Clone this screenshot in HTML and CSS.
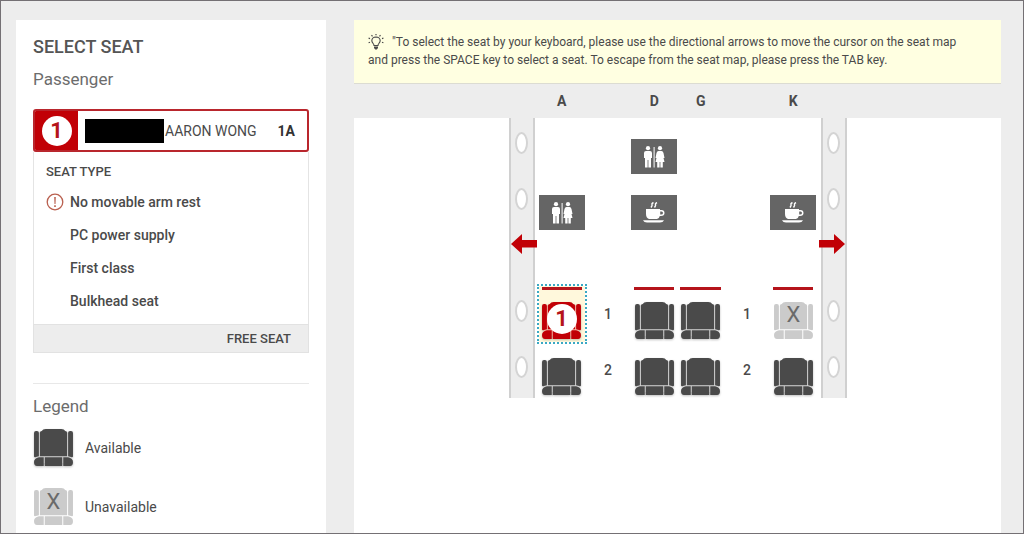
FILE: index.html
```html
<!DOCTYPE html>
<html lang="en">
<head>
  <meta charset="UTF-8" />
  <meta name="viewport" content="width=device-width, initial-scale=1.0"/>
  <title>Select Seat</title>
  <link rel="stylesheet" href="styles.css">
</head>
<body>

<!-- Shared icons -->
<svg class="icon-defs" aria-hidden="true">
  <symbol id="seat" viewBox="0 0 40 38">
    <path d="M6 4 Q6 2 8 2 Q9 0 12 0 H28 Q31 0 32 2 Q34 2 34 4 V28 H6 Z"/>
    <path d="M0 4 Q0 2 2 2 H3 Q5 2 5 4 V28 L1 29 Q0 29 0 28 Z"/>
    <path d="M40 4 Q40 2 38 2 H37 Q35 2 35 4 V28 L39 29 Q40 29 40 28 Z"/>
    <path d="M10 29 H5 Q0 30 0 34 Q0 38 3 38 H10 Z"/>
    <path d="M11 29 H29 V38 H11 Z"/>
    <path d="M30 29 H35 Q40 30 40 34 Q40 38 37 38 H30 Z"/>
  </symbol>
  <symbol id="lavatory" viewBox="0 0 22 22">
    <circle cx="5" cy="2.2" r="2.1"/>
    <path d="M3 5 H7 Q9 5 9 7 V12 H8 V21.5 H5.4 V14 H4.6 V21.5 H2 V12 H1 V7 Q1 5 3 5 Z"/>
    <path d="M10.6 1 H11.6 V21.5 H10.6 Z"/>
    <circle cx="17" cy="2.2" r="2.1"/>
    <path d="M15.5 5 H18.5 Q20 5 20.5 7 L21.5 12 H20.5 L21.5 16 H19.8 V21.5 H17.4 V16 H16.6 V21.5 H14.2 V16 H12.5 L13.5 12 H12.5 L13.5 7 Q14 5 15.5 5 Z"/>
  </symbol>
  <symbol id="galley" viewBox="0 0 22 22">
    <path d="M3 7 H17 V8 H18.5 Q21.5 8 21.5 11 Q21.5 14 18 14 H16.8 Q16 17 14 17 H6 Q3 16 3 12 Z M17.2 9.5 V12.5 H18 Q20 12.5 20 11 Q20 9.5 18.5 9.5 Z" fill-rule="evenodd"/>
    <path d="M0 18.2 H21 Q20 20.5 17 20.5 H4 Q1 20.5 0 18.2 Z"/>
    <path d="M10.5 0.5 Q8.5 1.5 9 2.5 Q9.5 3.5 8 5.5 M14 0.5 Q12 1.5 12.5 2.5 Q13 3.5 11.5 5.5" fill="none" stroke="currentColor" stroke-width="1.4"/>
  </symbol>
  <symbol id="arrow" viewBox="0 0 26 20">
    <path d="M0 10 L11 0 V6 H26 V13.5 H11 V20 Z"/>
  </symbol>
</svg>

<aside class="sidebar">
  <h1>SELECT SEAT</h1>
  <h2>Passenger</h2>

  <div class="passenger">
    <button class="passenger-head" type="button">
      <span class="passenger-no"><span class="badge">1</span></span>
      <span class="redacted"></span>
      <span class="passenger-name">AARON WONG</span>
      <span class="passenger-seat">1A</span>
    </button>
    <div class="details">
      <h3>SEAT TYPE</h3>
      <ul>
        <li>
          <svg class="alert" viewBox="0 0 18 18" aria-hidden="true">
            <circle cx="9" cy="9" r="7.8" fill="none" stroke="currentColor" stroke-width="1.3"/>
            <path d="M8.2 4 H9.8 L9.5 11 H8.5 Z M8.2 12.3 H9.8 V13.9 H8.2 Z" fill="currentColor"/>
          </svg>
          No movable arm rest
        </li>
        <li>PC power supply</li>
        <li>First class</li>
        <li>Bulkhead seat</li>
      </ul>
    </div>
    <button class="free-btn" type="button">FREE SEAT</button>
  </div>

  <div class="legend">
    <h2>Legend</h2>
    <div class="legend-item">
      <span class="seat"><svg><use href="#seat"/></svg></span>
      Available
    </div>
    <div class="legend-item">
      <span class="seat unavailable"><svg><use href="#seat"/></svg><span class="mark">X</span></span>
      Unavailable
    </div>
  </div>
</aside>

<main class="main">
  <p class="notice">
    <svg class="bulb" viewBox="0 0 16 16" aria-hidden="true">
      <path d="M6 11.5 Q6 10.3 4.8 9 Q3.8 8 3.8 6.6 Q4 3.2 8 3 Q12 3.2 12.2 6.6 Q12.2 8 11.2 9 Q10 10.3 10 11.5 Z" fill="none" stroke="currentColor" stroke-width="1.1"/>
      <path d="M6 12.5 H10 V14 L8.8 15.6 H7.2 L6 14 Z" fill="currentColor"/>
      <path d="M3.5 1.2 L4.5 2.4 M12.5 1.2 L11.5 2.4 M8 0 V1.3 M0.6 4.2 L2 4.6 M15.4 4.2 L14 4.6 M0.6 8.8 L2 8.3 M15.4 8.8 L14 8.3" stroke="currentColor" stroke-width="1.2"/>
    </svg>
    "To select the seat by your keyboard, please use the directional arrows to move the cursor on the seat map<br>
    and press the SPACE key to select a seat. To escape from the seat map, please press the TAB key.
  </p>

  <div class="row letters">
    <span>A</span><span></span><span>D</span><span>G</span><span></span><span>K</span>
  </div>

  <div class="map">
    <div class="cabin">
      <div class="wall">
        <div><span class="window"></span></div>
        <div><span class="window"></span></div>
        <div><svg class="exit"><use href="#arrow"/></svg></div>
        <div><span class="window"></span></div>
        <div><span class="window"></span></div>
      </div>

      <div class="floor">
        <div class="row">
          <span></span><span></span>
          <span class="facility"><svg><use href="#lavatory"/></svg></span>
          <span></span><span></span><span></span>
        </div>
        <div class="row">
          <span class="facility"><svg><use href="#lavatory"/></svg></span>
          <span></span>
          <span class="facility"><svg><use href="#galley"/></svg></span>
          <span></span><span></span>
          <span class="facility"><svg><use href="#galley"/></svg></span>
        </div>
        <div class="row"></div>
        <div class="row">
          <button class="seat bulkhead selected" type="button" aria-label="Seat 1A"><svg><use href="#seat"/></svg><span class="badge">1</span></button>
          <span class="row-no">1</span>
          <button class="seat bulkhead" type="button" aria-label="Seat 1D"><svg><use href="#seat"/></svg></button>
          <button class="seat bulkhead" type="button" aria-label="Seat 1G"><svg><use href="#seat"/></svg></button>
          <span class="row-no">1</span>
          <button class="seat bulkhead unavailable" type="button" aria-label="Seat 1K" disabled><svg><use href="#seat"/></svg><span class="mark">X</span></button>
        </div>
        <div class="row">
          <button class="seat" type="button" aria-label="Seat 2A"><svg><use href="#seat"/></svg></button>
          <span class="row-no">2</span>
          <button class="seat" type="button" aria-label="Seat 2D"><svg><use href="#seat"/></svg></button>
          <button class="seat" type="button" aria-label="Seat 2G"><svg><use href="#seat"/></svg></button>
          <span class="row-no">2</span>
          <button class="seat" type="button" aria-label="Seat 2K"><svg><use href="#seat"/></svg></button>
        </div>
      </div>

      <div class="wall right">
        <div><span class="window"></span></div>
        <div><span class="window"></span></div>
        <div><svg class="exit"><use href="#arrow"/></svg></div>
        <div><span class="window"></span></div>
        <div><span class="window"></span></div>
      </div>
    </div>
  </div>
</main>

</body>
</html>
```

FILE: styles.css
```css
* {
  box-sizing: border-box;
}

body {
  margin: 0;
  min-height: 100vh;
  display: flex;
  gap: 28px;
  padding: 19px 22px 0 15px;
  border: 1px solid #747074;
  background: #ededed;
  color: #4a4a4a;
  font-family: Roboto, sans-serif;
  font-size: 14px;
  line-height: 20px;
}

h1, h2, h3, p, ul {
  margin: 0;
  padding: 0;
}

button {
  padding: 0;
  border: none;
  background: none;
  color: inherit;
  font: inherit;
  cursor: pointer;
}

.icon-defs {
  position: absolute;
  width: 0;
  height: 0;
}

/* Sidebar */
.sidebar {
  flex: 0 0 310px;
  padding: 16px 17px 0;
  background: #fff;
}

h1 {
  color: #555;
  font-size: 18px;
  font-weight: 500;
  line-height: 22px;
}

h2 {
  color: #6c6c6c;
  font-size: 17px;
  font-weight: 400;
  line-height: 22px;
}

h1 + h2 {
  margin-top: 10px;
}

.passenger {
  margin-top: 19px;
}

.passenger-head {
  display: flex;
  align-items: center;
  width: 100%;
  height: 43px;
  overflow: hidden;
  border: 2px solid #b9262d;
  border-radius: 3px;
}

.passenger-no {
  display: flex;
  align-items: center;
  justify-content: center;
  align-self: stretch;
  width: 43px;
  background: #c10006;
}

.badge {
  display: flex;
  align-items: center;
  justify-content: center;
  width: 30px;
  height: 30px;
  border-radius: 50%;
  background: #fff;
  color: #b5141b;
  font-size: 22px;
  font-weight: 700;
}

.redacted {
  width: 79px;
  height: 24px;
  margin: 0 1px 0 7px;
  background: #000;
}

.passenger-seat {
  margin: 0 12px 0 auto;
  color: #333;
  font-weight: 700;
}

.details {
  padding: 10px 12px 13px;
  border: solid #e4e4e4;
  border-width: 0 1px;
}

h3 {
  font-size: 13px;
  font-weight: 500;
  line-height: 20px;
}

.details ul {
  display: grid;
  gap: 13px;
  margin-top: 10px;
  list-style: none;
}

.details li {
  position: relative;
  padding-left: 24px;
  font-weight: 500;
}

.alert {
  position: absolute;
  left: 0;
  top: 1px;
  width: 18px;
  height: 18px;
  color: #b9604f;
}

.free-btn {
  display: block;
  width: 100%;
  height: 29px;
  padding-right: 17px;
  border: 1px solid #e2e2e2;
  background: #ededed;
  font-size: 13px;
  font-weight: 500;
  text-align: right;
}

.legend {
  margin-top: 30px;
  padding-top: 11px;
  border-top: 1px solid #e8e8e8;
}

.legend-item {
  display: flex;
  align-items: center;
  gap: 12px;
  height: 37px;
  margin-top: 12px;
  padding-left: 1px;
}

.legend-item + .legend-item {
  margin-top: 22px;
}

/* Seats */
.seat {
  position: relative;
  display: flex;
  justify-content: center;
  color: #4a4a4a;
}

.seat svg {
  width: 39px;
  height: 37px;
  fill: currentColor;
  background: linear-gradient(#d8d8d8, #d8d8d8) center 3px / 35px 31px no-repeat;
  filter: drop-shadow(0 1px 1px rgba(0, 0, 0, 0.25));
}

.unavailable {
  color: #cbcbcb;
}

.unavailable svg {
  background: none;
  filter: none;
}

.mark {
  position: absolute;
  inset: 3px 0 auto;
  color: #6a6a6a;
  font-size: 22px;
  line-height: 22px;
  text-align: center;
}

/* Main */
.main {
  flex: 1;
  display: flex;
  flex-direction: column;
}

.notice {
  min-height: 64px;
  padding: 13px 14px;
  border-bottom: 1px solid #dcdcd2;
  background: #ffffe1;
  font-size: 12px;
  line-height: 18px;
}

.bulb {
  width: 16px;
  height: 16px;
  margin-right: 5px;
  vertical-align: -4px;
}

.row {
  display: grid;
  grid-template-columns: repeat(6, 1fr);
  height: 56px;
}

.letters {
  align-items: center;
  align-self: center;
  width: 278px;
  height: 34px;
  font-weight: 700;
  text-align: center;
}

.map {
  flex: 1;
  background: #fff;
}

.cabin {
  display: flex;
  width: 338px;
  margin: 0 auto;
}

.floor {
  flex: 1;
  padding: 0 4px;
}

.wall {
  width: 26px;
  border: solid #d0d0d0;
  border-width: 0 2px;
  background: #ededed;
}

.wall div {
  position: relative;
  height: 56px;
  padding-top: 14px;
}

.window {
  display: block;
  width: 13px;
  height: 22px;
  margin: 0 auto;
  border: 2px solid #d4d4d4;
  border-radius: 50%;
  background: #fff;
}

.exit {
  position: absolute;
  top: 4px;
  left: 0;
  width: 26px;
  height: 20px;
  fill: #c10006;
}

.right .exit {
  left: auto;
  right: 0;
  transform: scaleX(-1);
}

.facility {
  display: flex;
  align-items: center;
  justify-content: center;
  align-self: end;
  height: 35px;
  background: #656565;
  color: #fff;
}

.facility svg {
  width: 22px;
  height: 22px;
  fill: currentColor;
}

.row .seat {
  height: 56px;
  padding-top: 16px;
}

.bulkhead::before {
  content: '';
  position: absolute;
  top: 1px;
  left: 3px;
  right: 3px;
  height: 3px;
  background: #b5141b;
}

.row .unavailable .mark {
  top: 18px;
}

.selected {
  background: #fff8dc;
  color: #c10006;
  outline: 2px dotted #3aa9c4;
}

.selected svg {
  background: linear-gradient(#f3b9a8, #f3b9a8) center 3px / 35px 31px no-repeat;
}

.selected .badge {
  position: absolute;
  top: 18px;
}

.row-no {
  align-self: center;
  font-weight: 500;
  text-align: center;
}
```
